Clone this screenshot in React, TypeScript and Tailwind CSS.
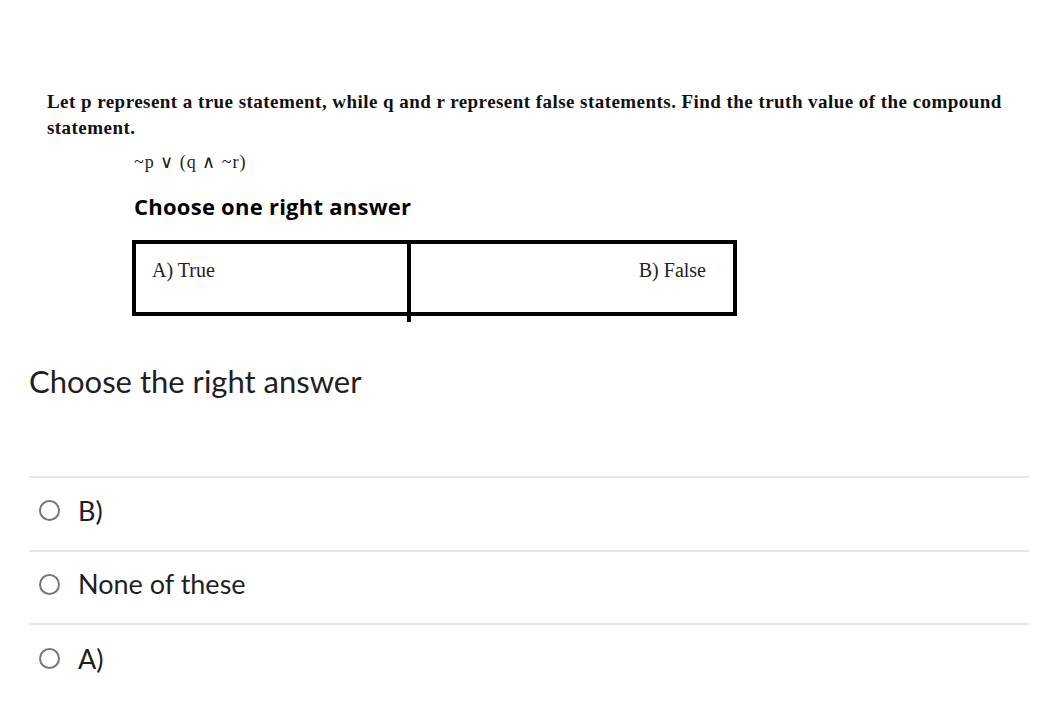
import React from "react"

function Radio() {
  return <span className="inline-block w-[21px] h-[21px] rounded-full border-2 border-[#777777] bg-white shrink-0" />
}

const options = ["B)", "None of these", "A)"]

export default function App() {
  return (
    <div className="w-[1061px] h-[711px] bg-white text-[#111] overflow-hidden font-['Lato',sans-serif]">
      {/* question image */}
      <div className="pt-[89px] pl-[47px]">
        <p className="w-[975px] font-['Liberation_Serif',serif] font-bold text-[19px] leading-[26px] tracking-[0.45px] text-[#111]">
          Let p represent a true statement, while q and r represent false statements. Find the truth value of the compound statement.
        </p>
        <div className="pl-[87px] mt-[8px]">
          <div className="font-['Liberation_Serif',serif] text-[18px] leading-[26px] tracking-[1px] text-[#222]">~p ∨ (q ∧ ~r)</div>
          <div className="mt-[17px] font-['Open_Sans',sans-serif] font-bold text-[22px] leading-[28px] tracking-[0.25px] text-black">
            Choose one right answer
          </div>
          <div className="relative mt-[20px] ml-[-2px] w-[605px] h-[76px] border-4 border-black flex">
            <div className="w-[275px] border-r-4 border-black pl-[16px] pt-[11px] font-['Liberation_Serif',serif] text-[20px] text-[#222]">
              A) True
            </div>
            <div className="flex-1 pr-[27px] pt-[11px] text-right font-['Liberation_Serif',serif] text-[20px] text-[#222]">
              B) False
            </div>
            <span className="absolute left-[271px] bottom-[-10px] w-[4px] h-[6px] bg-black" />
          </div>
        </div>
      </div>

      <h2 className="mt-[46px] pl-[29px] font-['Lato',sans-serif] text-[31px] leading-[38px] text-[#1f1f1f]">
        Choose the right answer
      </h2>

      <div className="mt-[76px] mx-[29px] w-[1000px] border-t-2 border-[#e6e6e6]">
        {options.map((o, i) => (
          <div
            key={o}
            className={`flex items-center h-[73.5px] pl-[10px] pb-[6px] gap-[18px] ${i < options.length - 1 ? "border-b-2 border-[#e6e6e6]" : ""}`}
          >
            <Radio />
            <span className="font-['Lato',sans-serif] text-[27px] text-[#1f1f1f]">{o}</span>
          </div>
        ))}
      </div>
    </div>
  )
}
